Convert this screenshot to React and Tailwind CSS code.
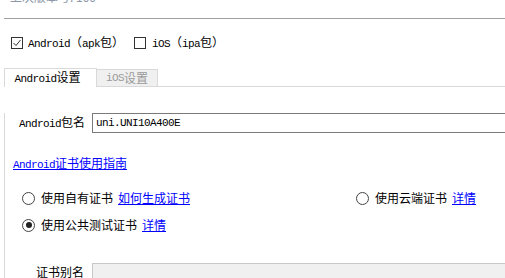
import React from 'react';

const Mono = ({ children }) => (
    <span className="font-['Liberation_Mono',monospace] text-[11px] tracking-[-0.6px]">{children}</span>
);

const Check = ({ checked }) => (
    <span className="flex h-[12px] w-[12px] shrink-0 items-center justify-center border border-[#333] bg-white">
        {checked && (
            <svg width="10" height="10" viewBox="0 0 10 10">
                <polyline points="1.5,5 4,7.5 8.5,2" fill="none" stroke="#333" strokeWidth="1" />
            </svg>
        )}
    </span>
);

const Radio = ({ on }) => (
    <span className="flex h-[13px] w-[13px] shrink-0 items-center justify-center rounded-full border border-[#444] bg-white">
        {on && <span className="h-[6px] w-[6px] rounded-full bg-[#222]"></span>}
    </span>
);

const App = () => {
    return (
        <div className="w-[505px] h-[278px] overflow-hidden bg-white text-black text-[12px] font-['Noto_Sans_CJK_SC',sans-serif]">
            <div className="h-[18px] overflow-hidden">
                <div className="-mt-[10px] pl-[10px] leading-[14px] text-[#8a96a8]">上次版本号: 100</div>
            </div>
            <div className="ml-[4px] h-px bg-[#a0a0a0]"></div>

            {/* platform checkboxes */}
            <div className="mt-[18px] flex h-[12px] items-center leading-[14px]">
                <span className="ml-[11px]"><Check checked /></span>
                <span className="ml-[5px] whitespace-nowrap"><Mono>Android</Mono>（<Mono>apk</Mono>包）</span>
                <span className="ml-[10px]"><Check /></span>
                <span className="ml-[6px] whitespace-nowrap"><Mono>iOS</Mono>（<Mono>ipa</Mono>包）</span>
            </div>

            {/* tabs */}
            <div className="mt-[19px] ml-[4px] flex h-[19px] items-end">
                <div className="flex h-[19px] w-[93px] items-center justify-center border-l border-t border-r border-[#d9d9d9] bg-white leading-[14px]">
                    <span className="-ml-[6px]"><Mono>Android</Mono>设置</span>
                </div>
                <div className="flex h-[18px] w-[61px] items-center justify-center border-t border-r border-b border-[#d9d9d9] bg-[#f0f0f0] leading-[14px] text-[#9a9a9a]">
                    <Mono>iOS</Mono>设置
                </div>
                <div className="h-full flex-1 border-b border-[#d9d9d9]"></div>
            </div>

            <div className="ml-[4px] h-[300px] border-l border-[#d9d9d9]">
                <div className="mt-[26px] flex h-[20px] items-center pl-[14px]">
                    <span className="w-[73px] shrink-0 whitespace-nowrap leading-[14px]"><Mono>Android</Mono>包名</span>
                    <div className="flex h-[20px] w-[450px] shrink-0 items-center border border-[#7a7a7a] pl-[3px] leading-[14px]">
                        <Mono>uni.UNI10A400E</Mono>
                    </div>
                </div>

                <div className="mt-[23px] pl-[8px] leading-[14px]">
                    <a className="text-[#0000ff] underline underline-offset-1"><Mono>Android</Mono>证书使用指南</a>
                </div>

                <div className="mt-[19px] flex h-[14px] items-center leading-[14px]">
                    <div className="ml-[17px] flex w-[334px] items-center">
                        <Radio />
                        <span className="ml-[6px]">使用自有证书</span>
                        <a className="ml-[5px] text-[#0000ff] underline underline-offset-1">如何生成证书</a>
                    </div>
                    <Radio />
                    <span className="ml-[6px]">使用云端证书</span>
                    <a className="ml-[5px] text-[#0000ff] underline underline-offset-1">详情</a>
                </div>

                <div className="mt-[13px] flex h-[14px] items-center leading-[14px]">
                    <span className="ml-[17px]"><Radio on /></span>
                    <span className="ml-[6px]">使用公共测试证书</span>
                    <a className="ml-[5px] text-[#0000ff] underline underline-offset-1">详情</a>
                </div>

                <div className="mt-[31px] flex items-start pl-[31px]">
                    <span className="mt-[3px] w-[56px] shrink-0 leading-[12px]">证书别名</span>
                    <div className="h-[20px] w-[450px] shrink-0 border border-[#c8c8c8] bg-[#f0f0f0]"></div>
                </div>
            </div>
        </div>
    );
};

export default App;
